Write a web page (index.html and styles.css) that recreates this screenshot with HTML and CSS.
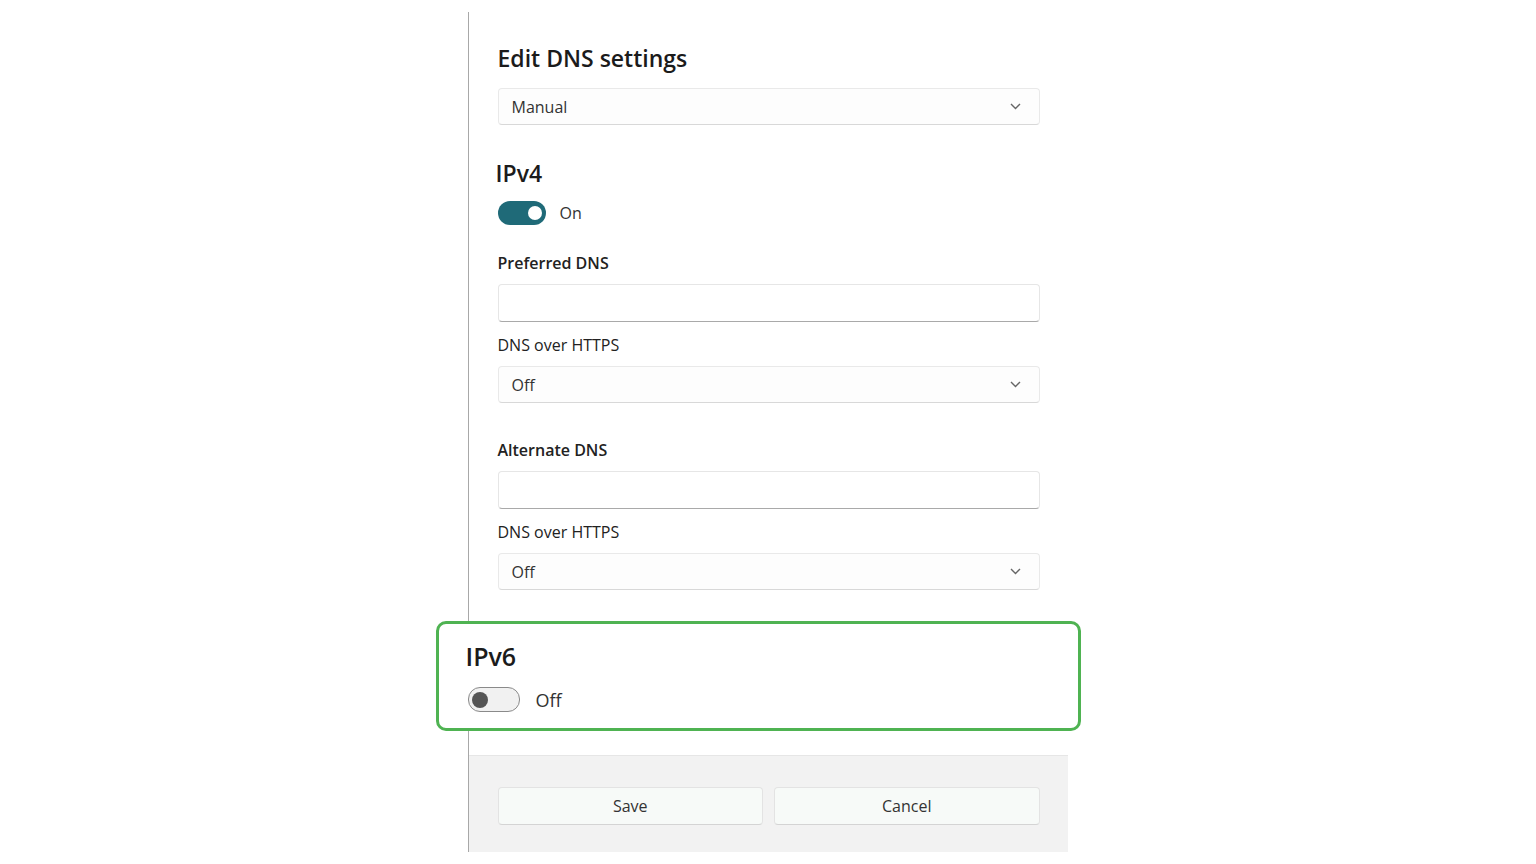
FILE: index.html
```html
<!DOCTYPE html>
<html>
<head>
    <title>Edit DNS settings</title>
    <link rel="stylesheet" href="styles.css">
</head>
<body>
    <div class="dialog">
        <div class="content">
            <h1 class="title">Edit DNS settings</h1>
            <div class="select">
                <span>Manual</span>
                <svg class="chevron" width="11" height="7" viewBox="0 0 11 7"><path d="M1 1 L5.5 5.5 L10 1" fill="none" stroke="#666" stroke-width="1.4"/></svg>
            </div>

            <h2 class="section">IPv4</h2>
            <div class="toggle-row">
                <span class="toggle on"><span class="knob"></span></span>
                <span class="toggle-label">On</span>
            </div>

            <div class="field-label strong first">Preferred DNS</div>
            <div class="input"></div>
            <div class="field-label">DNS over HTTPS</div>
            <div class="select small">
                <span>Off</span>
                <svg class="chevron" width="11" height="7" viewBox="0 0 11 7"><path d="M1 1 L5.5 5.5 L10 1" fill="none" stroke="#666" stroke-width="1.4"/></svg>
            </div>

            <div class="field-label strong gap">Alternate DNS</div>
            <div class="input"></div>
            <div class="field-label">DNS over HTTPS</div>
            <div class="select small">
                <span>Off</span>
                <svg class="chevron" width="11" height="7" viewBox="0 0 11 7"><path d="M1 1 L5.5 5.5 L10 1" fill="none" stroke="#666" stroke-width="1.4"/></svg>
            </div>

            <div class="highlight">
                <h2 class="section big">IPv6</h2>
                <div class="toggle-row">
                    <span class="toggle off"><span class="knob"></span></span>
                    <span class="toggle-label big">Off</span>
                </div>
            </div>
        </div>
        <div class="footer">
            <button>Save</button>
            <button>Cancel</button>
        </div>
    </div>
</body>
</html>
```

FILE: styles.css
```css
body {
    margin: 0;
    background: #fff;
    font-family: "Open Sans", "Noto Sans", sans-serif;
    color: #1b1b1b;
}
.dialog {
    width: 598.5px;
    margin: 12px 0 0 468px;
    border-left: 1.5px solid #a8a8a8;
}
.content {
    padding: 30px 28px 0 28.5px;
}
.title {
    margin: 0;
    font-size: 23px;
    line-height: 32px;
    font-weight: 600;
}
.select {
    display: flex;
    align-items: center;
    justify-content: space-between;
    height: 35px;
    margin-top: 14px;
    padding: 0 18px 0 13px;
    background: #fdfdfd;
    border: 1px solid #e9e9e9;
    border-bottom-color: #d8d8d8;
    border-radius: 4px;
    font-size: 16px;
    color: #333;
}
.select.small {
    margin-top: 10px;
}
.section {
    margin: 32px 0 0 -2px;
    font-size: 23px;
    line-height: 32px;
    font-weight: 600;
}
.toggle-row {
    display: flex;
    align-items: center;
    gap: 14px;
    margin-top: 12px;
}
.toggle {
    display: flex;
    align-items: center;
    box-sizing: border-box;
    width: 48px;
    height: 24px;
    border-radius: 12px;
}
.toggle.on {
    background: #1f6a78;
    justify-content: flex-end;
    padding-right: 4px;
}
.toggle.on .knob {
    width: 14px;
    height: 14px;
    border-radius: 50%;
    background: #fff;
}
.toggle.off {
    width: 52px;
    height: 25px;
    background: #f1f1f1;
    border: 1.5px solid #8a8a8a;
    padding-left: 3px;
}
.toggle.off .knob {
    width: 16px;
    height: 16px;
    border-radius: 50%;
    background: #555;
}
.toggle-label {
    font-size: 16px;
    color: #333;
}
.toggle-label.big {
    font-size: 18px;
}
.field-label {
    margin-top: 12px;
    font-size: 16px;
    line-height: 22px;
    color: #222;
}
.field-label.strong {
    font-weight: 600;
}
.field-label.first {
    margin-top: 27px;
}
.field-label.gap {
    margin-top: 36px;
}
.input {
    height: 36px;
    margin-top: 10px;
    background: #fff;
    border: 1px solid #e6e6e6;
    border-bottom: 1.5px solid #a9a9a9;
    border-radius: 4px;
}
.highlight {
    margin: 31px -41px 0 -62px;
    padding: 16px 27px 16px 27px;
    background: #fff;
    border: 3px solid #4fb352;
    border-radius: 10px;
}
.highlight .section {
    margin: 0;
}
.section.big {
    font-size: 25px;
}
.highlight .toggle-row {
    margin: 15px 0 0 2px;
    gap: 16px;
}
.footer {
    display: flex;
    gap: 11px;
    margin-top: 24px;
    padding: 31px 28px 27px 28.5px;
    background: #f2f2f2;
    border-top: 1px solid #e6e6e6;
}
button {
    flex: 1;
    height: 38px;
    font-family: inherit;
    font-size: 16px;
    color: #333;
    background: #f7faf8;
    border: 1px solid #e3e3e3;
    border-bottom-color: #d4d4d4;
    border-radius: 4px;
}
```
